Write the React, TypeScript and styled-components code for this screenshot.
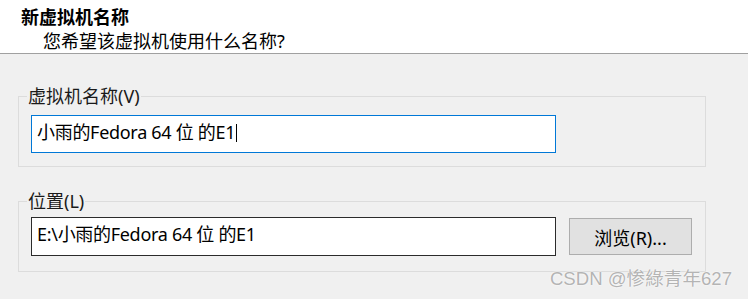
import React from 'react';
import styled, { createGlobalStyle } from 'styled-components';

const GlobalStyle = createGlobalStyle`
  html, body {
    margin: 0;
    padding: 0;
    background: #f0f0f0;
  }
  body {
    font-family: 'Noto Sans', 'Noto Sans CJK SC', sans-serif;
    color: #000;
  }
`;

const Page = styled.div`
  position: relative;
  width: 748px;
  height: 299px;
  overflow: hidden;
  background: #f0f0f0;
`;

const Header = styled.div`
  height: 48px;
  padding-top: 5px;
  background: #fff;
  border-bottom: 1px solid #a0a0a0;
`;

const Title = styled.div`
  padding-left: 21px;
  font-size: 18px;
  line-height: 24px;
  font-weight: 700;
`;

const Subtitle = styled.div`
  padding-left: 43px;
  font-size: 18px;
  line-height: 24px;
`;

const Body = styled.div`
  padding: 31px 42px 0 18px;
  display: flex;
  flex-direction: column;
  gap: 23px;
`;

const Group = styled.fieldset<{ $top: number; $bottom: number }>`
  margin: 0;
  padding: ${({ $top, $bottom }) => `${$top}px 12px ${$bottom}px 12px`};
  border: 1px solid #dcdcdc;
  min-width: 0;
`;

const Legend = styled.legend`
  margin-left: -4px;
  padding: 0 1px;
  font-size: 18px;
  line-height: 22px;
  color: #1a1a1a;
`;

const Row = styled.div`
  display: flex;
  align-items: center;
  gap: 13px;
`;

const Field = styled.div<{ $focused?: boolean; $height: number }>`
  box-sizing: border-box;
  width: 525px;
  height: ${({ $height }) => $height}px;
  padding: 3px 5px 0;
  background: #fff;
  border: 1px solid ${({ $focused }) => ($focused ? '#0078d7' : '#2b2b2b')};
  font-size: 18px;
  line-height: 26px;
  letter-spacing: -0.3px;
  white-space: nowrap;
  display: flex;
  align-items: flex-start;
`;

const Caret = styled.span`
  display: inline-block;
  width: 1px;
  height: 18px;
  margin-top: 5px;
  margin-left: 1px;
  background: #000;
`;

const Button = styled.div`
  box-sizing: border-box;
  width: 123px;
  height: 37px;
  background: #e1e1e1;
  border: 1px solid #adadad;
  font-size: 18px;
  display: flex;
  align-items: center;
  justify-content: center;
`;

const Watermark = styled.div`
  position: absolute;
  right: 16px;
  bottom: 8px;
  font-family: 'Liberation Sans', 'Noto Sans CJK TC', sans-serif;
  font-size: 18.6px;
  line-height: 24px;
  color: #b4b4b4;
  text-shadow: 0 0 1px #fff, 0 0 2px #fff;
`;

export default function App() {
  return (
    <>
      <GlobalStyle />
      <Page>
        <Header>
          <Title>新虚拟机名称</Title>
          <Subtitle>您希望该虚拟机使用什么名称?</Subtitle>
        </Header>
        <Body>
          <Group $top={8} $bottom={13}>
            <Legend>虚拟机名称(V)</Legend>
            <Field $focused $height={38}>
              小雨的Fedora 64 位 的E1
              <Caret />
            </Field>
          </Group>
          <Group $top={5} $bottom={15}>
            <Legend>位置(L)</Legend>
            <Row>
              <Field $height={39}>E:\小雨的Fedora 64 位 的E1</Field>
              <Button>浏览(R)...</Button>
            </Row>
          </Group>
        </Body>
        <Watermark>CSDN @惨綠青年627</Watermark>
      </Page>
    </>
  );
}
